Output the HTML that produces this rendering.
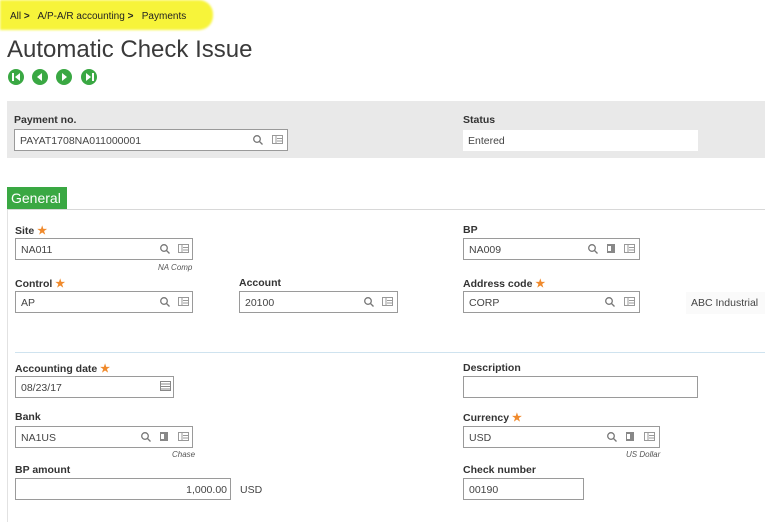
<!DOCTYPE html>
<html><head><meta charset="utf-8"><style>
*{margin:0;padding:0;box-sizing:border-box}
body{width:765px;height:522px;background:#fff;font-family:"Liberation Sans",sans-serif;color:#333;position:relative;overflow:hidden}
.a{position:absolute}
.lbl{position:absolute;font-size:10.5px;font-weight:bold;color:#333}
.st{color:#f08a2c;font-size:11px}
.in{position:absolute;border:1px solid #9a9a9a;background:#fff;height:22px;font-size:10.5px;color:#444;padding:5px 0 0 5px}
.sub{position:absolute;font-size:8px;font-style:italic;color:#555}
</style></head><body>
<div class="a" style="left:0;top:0;width:213px;height:30px;background:#f7f43a;border-radius:0 14px 14px 0;filter:blur(1px)"></div>
<div class="a" style="left:10px;top:11px;font-size:10px;color:#222">All <b>&gt;</b>&nbsp;&nbsp; A/P-A/R accounting <b>&gt;</b>&nbsp;&nbsp; Payments</div>
<div class="a" style="left:7px;top:36px;font-size:24px;color:#3a3a3a">Automatic Check Issue</div>
<svg class="a" style="left:7px;top:68px" width="95" height="18">
<g fill="#3aa843"><circle cx="9" cy="9" r="8"/><circle cx="33" cy="9" r="8"/><circle cx="57" cy="9" r="8"/><circle cx="82" cy="9" r="8"/></g>
<g fill="#fff"><rect x="5" y="5" width="2" height="8"/><path d="M13 5v8l-5-4z"/><path d="M35 5v8l-5-4z"/><path d="M55 5v8l5-4z"/><path d="M79 5v8l5-4z"/><rect x="85" y="5" width="2" height="8"/></g>
</svg>
<div class="a" style="left:7px;top:101px;width:758px;height:57px;background:#e9e9e9"></div>
<div class="lbl" style="left:14px;top:114px">Payment no.</div>
<div class="in" style="left:14px;top:129px;width:274px">PAYAT1708NA011000001</div>
<div class="lbl" style="left:463px;top:114px">Status</div>
<div class="in" style="left:463px;top:130px;width:235px;border:none;height:21px">Entered</div>
<div class="a" style="left:7px;top:187px;width:60px;height:23px;background:#3aa843;color:#fff;font-size:14px;padding:3px 0 0 4px">General</div>
<div class="a" style="left:7px;top:209px;width:758px;height:1px;background:#d8d8d8"></div>
<div class="a" style="left:7px;top:210px;width:1px;height:312px;background:#e2e2e2"></div>
<div class="a" style="left:15px;top:352px;width:750px;height:1px;background:#cfe3ef"></div>

<div class="lbl" style="left:15px;top:224px">Site <span class="st">★</span></div>
<div class="in" style="left:15px;top:238px;width:178px">NA011</div>
<div class="sub" style="left:158px;top:263px">NA Comp</div>
<div class="lbl" style="left:463px;top:224px">BP</div>
<div class="in" style="left:463px;top:238px;width:177px">NA009</div>

<div class="lbl" style="left:15px;top:277px">Control <span class="st">★</span></div>
<div class="in" style="left:15px;top:291px;width:178px">AP</div>
<div class="lbl" style="left:239px;top:277px">Account</div>
<div class="in" style="left:239px;top:291px;width:159px">20100</div>
<div class="lbl" style="left:463px;top:277px">Address code <span class="st">★</span></div>
<div class="in" style="left:463px;top:291px;width:177px">CORP</div>
<div class="a" style="left:686px;top:292px;width:79px;height:22px;background:#fafafa;font-size:10.5px;color:#444;padding:5px 0 0 5px">ABC Industrial</div>

<div class="lbl" style="left:15px;top:362px">Accounting date <span class="st">★</span></div>
<div class="in" style="left:15px;top:376px;width:159px">08/23/17</div>
<div class="lbl" style="left:463px;top:362px">Description</div>
<div class="in" style="left:463px;top:376px;width:235px"></div>

<div class="lbl" style="left:15px;top:411px">Bank</div>
<div class="in" style="left:15px;top:426px;width:178px">NA1US</div>
<div class="sub" style="left:172px;top:450px">Chase</div>
<div class="lbl" style="left:463px;top:411px">Currency <span class="st">★</span></div>
<div class="in" style="left:463px;top:426px;width:197px">USD</div>
<div class="sub" style="left:626px;top:450px">US Dollar</div>

<div class="lbl" style="left:15px;top:464px">BP amount</div>
<div class="in" style="left:15px;top:478px;width:216px;text-align:right;padding-right:3px">1,000.00</div>
<div class="a" style="left:240px;top:484px;font-size:10.5px;color:#444">USD</div>
<div class="lbl" style="left:463px;top:464px">Check number</div>
<div class="in" style="left:463px;top:478px;width:121px">00190</div>

<svg width="765" height="522" class="a" style="left:0;top:0">
<defs>
<g id="q" fill="none" stroke="#777" stroke-width="1.3"><circle cx="4" cy="4" r="3.3"/><path d="M6.5 6.5l3 3"/></g>
<g id="c" fill="none" stroke="#999" stroke-width="1"><rect x="0.5" y="0.5" width="10" height="8"/><path d="M4 1v8M5 3.5h5M5 6h5"/></g>
<g id="d"><rect x="0" y="0" width="8" height="9" fill="#888"/><rect x="1" y="2" width="3" height="5" fill="#fff"/></g>
</defs>
<use href="#q" x="253" y="135"/><use href="#c" x="272" y="135"/>
<use href="#q" x="160" y="244"/><use href="#c" x="178" y="244"/>
<use href="#q" x="588" y="244"/><use href="#d" x="607" y="244"/><use href="#c" x="624" y="244"/>
<use href="#q" x="160" y="297"/><use href="#c" x="178" y="297"/>
<use href="#q" x="364" y="297"/><use href="#c" x="382" y="297"/>
<use href="#q" x="605" y="297"/><use href="#c" x="624" y="297"/>
<g fill="none" stroke="#888"><rect x="160.5" y="381.5" width="10" height="9"/><path d="M161 384h9M161 386.5h9M161 389h9"/></g>
<use href="#q" x="141" y="432"/><use href="#d" x="160" y="432"/><use href="#c" x="178" y="432"/>
<use href="#q" x="607" y="432"/><use href="#d" x="626" y="432"/><use href="#c" x="644" y="432"/>
</svg>
</body></html>
